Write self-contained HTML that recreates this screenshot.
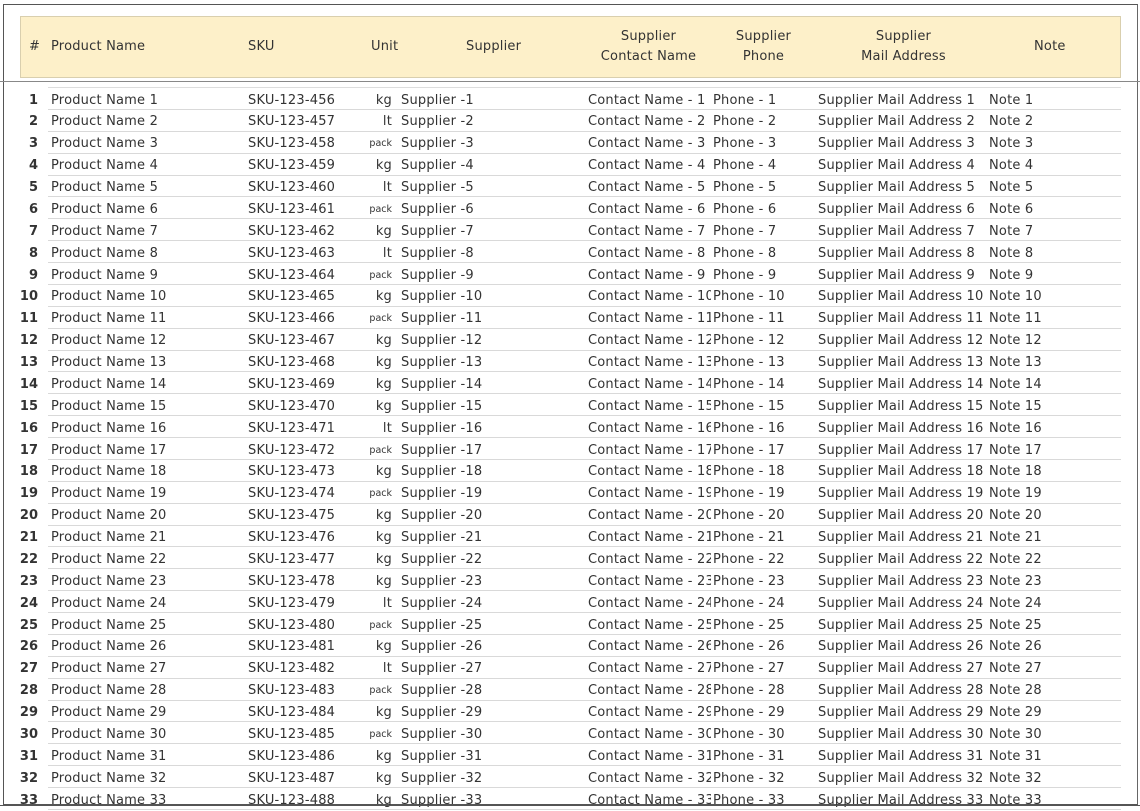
<!DOCTYPE html>
<html><head><meta charset="utf-8"><style>
*{margin:0;padding:0;box-sizing:border-box}
body{width:1140px;height:806px;overflow:hidden;background:#fff;font-family:"DejaVu Sans","Liberation Sans",sans-serif;color:#333;position:relative}
.frame{position:absolute;left:3px;top:4px;width:1135px;height:801px;border:1px solid #555;border-right-color:#666}
.hdr{position:absolute;left:20px;top:16px;width:1101px;height:62px;background:#fdf0c9;border:1px solid #d9cfae}
.hdr span{position:absolute;font-size:13px;line-height:19.5px;text-align:center;color:#333;letter-spacing:0.2px}
.hl{position:absolute;left:0;top:81px;width:1140px;height:1px;background:#888}
.hl2{position:absolute;left:48px;top:87px;width:1073px;height:1px;background:#ddd}
.r{position:absolute;left:0;width:1140px;height:21.875px;font-size:13px;line-height:21px;white-space:nowrap;letter-spacing:0.2px}
.r::after{content:"";position:absolute;left:48px;right:19px;bottom:0;height:1px;background:#d9d9d9}
.r span{position:absolute;top:1.5px}
.n{right:1102px;font-weight:bold;text-align:right;letter-spacing:0}
.p{left:51px}.s{left:248px}.u{right:748px}.u.k{font-size:9.5px;letter-spacing:0}
.sp{left:401px}.c{left:588px;width:123px;overflow:hidden}.ph{left:713px}.m{left:818px}.no{left:989px}
</style></head><body>
<div class="frame"></div>
<div class="hdr">
<span style="left:8px;top:20px">#</span>
<span style="left:30px;top:20px">Product Name</span>
<span style="left:227px;top:20px">SKU</span>
<span style="left:350px;top:20px">Unit</span>
<span style="left:445px;top:20px">Supplier</span>
<span style="left:570px;top:10px;width:115px">Supplier<br>Contact Name</span>
<span style="left:705px;top:10px;width:75px">Supplier<br>Phone</span>
<span style="left:820px;top:10px;width:125px">Supplier<br>Mail Address</span>
<span style="left:1013px;top:20px">Note</span>
</div>
<div class="hl"></div><div class="hl2"></div>
<div id="rows">
<div class="r" style="top:88px"><span class="n">1</span><span class="p">Product Name 1</span><span class="s">SKU-123-456</span><span class="u">kg</span><span class="sp">Supplier -1</span><span class="c">Contact Name - 1</span><span class="ph">Phone - 1</span><span class="m">Supplier Mail Address 1</span><span class="no">Note 1</span></div>
<div class="r" style="top:109.875px"><span class="n">2</span><span class="p">Product Name 2</span><span class="s">SKU-123-457</span><span class="u">lt</span><span class="sp">Supplier -2</span><span class="c">Contact Name - 2</span><span class="ph">Phone - 2</span><span class="m">Supplier Mail Address 2</span><span class="no">Note 2</span></div>
<div class="r" style="top:131.75px"><span class="n">3</span><span class="p">Product Name 3</span><span class="s">SKU-123-458</span><span class="u k">pack</span><span class="sp">Supplier -3</span><span class="c">Contact Name - 3</span><span class="ph">Phone - 3</span><span class="m">Supplier Mail Address 3</span><span class="no">Note 3</span></div>
<div class="r" style="top:153.625px"><span class="n">4</span><span class="p">Product Name 4</span><span class="s">SKU-123-459</span><span class="u">kg</span><span class="sp">Supplier -4</span><span class="c">Contact Name - 4</span><span class="ph">Phone - 4</span><span class="m">Supplier Mail Address 4</span><span class="no">Note 4</span></div>
<div class="r" style="top:175.5px"><span class="n">5</span><span class="p">Product Name 5</span><span class="s">SKU-123-460</span><span class="u">lt</span><span class="sp">Supplier -5</span><span class="c">Contact Name - 5</span><span class="ph">Phone - 5</span><span class="m">Supplier Mail Address 5</span><span class="no">Note 5</span></div>
<div class="r" style="top:197.375px"><span class="n">6</span><span class="p">Product Name 6</span><span class="s">SKU-123-461</span><span class="u k">pack</span><span class="sp">Supplier -6</span><span class="c">Contact Name - 6</span><span class="ph">Phone - 6</span><span class="m">Supplier Mail Address 6</span><span class="no">Note 6</span></div>
<div class="r" style="top:219.25px"><span class="n">7</span><span class="p">Product Name 7</span><span class="s">SKU-123-462</span><span class="u">kg</span><span class="sp">Supplier -7</span><span class="c">Contact Name - 7</span><span class="ph">Phone - 7</span><span class="m">Supplier Mail Address 7</span><span class="no">Note 7</span></div>
<div class="r" style="top:241.125px"><span class="n">8</span><span class="p">Product Name 8</span><span class="s">SKU-123-463</span><span class="u">lt</span><span class="sp">Supplier -8</span><span class="c">Contact Name - 8</span><span class="ph">Phone - 8</span><span class="m">Supplier Mail Address 8</span><span class="no">Note 8</span></div>
<div class="r" style="top:263px"><span class="n">9</span><span class="p">Product Name 9</span><span class="s">SKU-123-464</span><span class="u k">pack</span><span class="sp">Supplier -9</span><span class="c">Contact Name - 9</span><span class="ph">Phone - 9</span><span class="m">Supplier Mail Address 9</span><span class="no">Note 9</span></div>
<div class="r" style="top:284.875px"><span class="n">10</span><span class="p">Product Name 10</span><span class="s">SKU-123-465</span><span class="u">kg</span><span class="sp">Supplier -10</span><span class="c">Contact Name - 10</span><span class="ph">Phone - 10</span><span class="m">Supplier Mail Address 10</span><span class="no">Note 10</span></div>
<div class="r" style="top:306.75px"><span class="n">11</span><span class="p">Product Name 11</span><span class="s">SKU-123-466</span><span class="u k">pack</span><span class="sp">Supplier -11</span><span class="c">Contact Name - 11</span><span class="ph">Phone - 11</span><span class="m">Supplier Mail Address 11</span><span class="no">Note 11</span></div>
<div class="r" style="top:328.625px"><span class="n">12</span><span class="p">Product Name 12</span><span class="s">SKU-123-467</span><span class="u">kg</span><span class="sp">Supplier -12</span><span class="c">Contact Name - 12</span><span class="ph">Phone - 12</span><span class="m">Supplier Mail Address 12</span><span class="no">Note 12</span></div>
<div class="r" style="top:350.5px"><span class="n">13</span><span class="p">Product Name 13</span><span class="s">SKU-123-468</span><span class="u">kg</span><span class="sp">Supplier -13</span><span class="c">Contact Name - 13</span><span class="ph">Phone - 13</span><span class="m">Supplier Mail Address 13</span><span class="no">Note 13</span></div>
<div class="r" style="top:372.375px"><span class="n">14</span><span class="p">Product Name 14</span><span class="s">SKU-123-469</span><span class="u">kg</span><span class="sp">Supplier -14</span><span class="c">Contact Name - 14</span><span class="ph">Phone - 14</span><span class="m">Supplier Mail Address 14</span><span class="no">Note 14</span></div>
<div class="r" style="top:394.25px"><span class="n">15</span><span class="p">Product Name 15</span><span class="s">SKU-123-470</span><span class="u">kg</span><span class="sp">Supplier -15</span><span class="c">Contact Name - 15</span><span class="ph">Phone - 15</span><span class="m">Supplier Mail Address 15</span><span class="no">Note 15</span></div>
<div class="r" style="top:416.125px"><span class="n">16</span><span class="p">Product Name 16</span><span class="s">SKU-123-471</span><span class="u">lt</span><span class="sp">Supplier -16</span><span class="c">Contact Name - 16</span><span class="ph">Phone - 16</span><span class="m">Supplier Mail Address 16</span><span class="no">Note 16</span></div>
<div class="r" style="top:438px"><span class="n">17</span><span class="p">Product Name 17</span><span class="s">SKU-123-472</span><span class="u k">pack</span><span class="sp">Supplier -17</span><span class="c">Contact Name - 17</span><span class="ph">Phone - 17</span><span class="m">Supplier Mail Address 17</span><span class="no">Note 17</span></div>
<div class="r" style="top:459.875px"><span class="n">18</span><span class="p">Product Name 18</span><span class="s">SKU-123-473</span><span class="u">kg</span><span class="sp">Supplier -18</span><span class="c">Contact Name - 18</span><span class="ph">Phone - 18</span><span class="m">Supplier Mail Address 18</span><span class="no">Note 18</span></div>
<div class="r" style="top:481.75px"><span class="n">19</span><span class="p">Product Name 19</span><span class="s">SKU-123-474</span><span class="u k">pack</span><span class="sp">Supplier -19</span><span class="c">Contact Name - 19</span><span class="ph">Phone - 19</span><span class="m">Supplier Mail Address 19</span><span class="no">Note 19</span></div>
<div class="r" style="top:503.625px"><span class="n">20</span><span class="p">Product Name 20</span><span class="s">SKU-123-475</span><span class="u">kg</span><span class="sp">Supplier -20</span><span class="c">Contact Name - 20</span><span class="ph">Phone - 20</span><span class="m">Supplier Mail Address 20</span><span class="no">Note 20</span></div>
<div class="r" style="top:525.5px"><span class="n">21</span><span class="p">Product Name 21</span><span class="s">SKU-123-476</span><span class="u">kg</span><span class="sp">Supplier -21</span><span class="c">Contact Name - 21</span><span class="ph">Phone - 21</span><span class="m">Supplier Mail Address 21</span><span class="no">Note 21</span></div>
<div class="r" style="top:547.375px"><span class="n">22</span><span class="p">Product Name 22</span><span class="s">SKU-123-477</span><span class="u">kg</span><span class="sp">Supplier -22</span><span class="c">Contact Name - 22</span><span class="ph">Phone - 22</span><span class="m">Supplier Mail Address 22</span><span class="no">Note 22</span></div>
<div class="r" style="top:569.25px"><span class="n">23</span><span class="p">Product Name 23</span><span class="s">SKU-123-478</span><span class="u">kg</span><span class="sp">Supplier -23</span><span class="c">Contact Name - 23</span><span class="ph">Phone - 23</span><span class="m">Supplier Mail Address 23</span><span class="no">Note 23</span></div>
<div class="r" style="top:591.125px"><span class="n">24</span><span class="p">Product Name 24</span><span class="s">SKU-123-479</span><span class="u">lt</span><span class="sp">Supplier -24</span><span class="c">Contact Name - 24</span><span class="ph">Phone - 24</span><span class="m">Supplier Mail Address 24</span><span class="no">Note 24</span></div>
<div class="r" style="top:613px"><span class="n">25</span><span class="p">Product Name 25</span><span class="s">SKU-123-480</span><span class="u k">pack</span><span class="sp">Supplier -25</span><span class="c">Contact Name - 25</span><span class="ph">Phone - 25</span><span class="m">Supplier Mail Address 25</span><span class="no">Note 25</span></div>
<div class="r" style="top:634.875px"><span class="n">26</span><span class="p">Product Name 26</span><span class="s">SKU-123-481</span><span class="u">kg</span><span class="sp">Supplier -26</span><span class="c">Contact Name - 26</span><span class="ph">Phone - 26</span><span class="m">Supplier Mail Address 26</span><span class="no">Note 26</span></div>
<div class="r" style="top:656.75px"><span class="n">27</span><span class="p">Product Name 27</span><span class="s">SKU-123-482</span><span class="u">lt</span><span class="sp">Supplier -27</span><span class="c">Contact Name - 27</span><span class="ph">Phone - 27</span><span class="m">Supplier Mail Address 27</span><span class="no">Note 27</span></div>
<div class="r" style="top:678.625px"><span class="n">28</span><span class="p">Product Name 28</span><span class="s">SKU-123-483</span><span class="u k">pack</span><span class="sp">Supplier -28</span><span class="c">Contact Name - 28</span><span class="ph">Phone - 28</span><span class="m">Supplier Mail Address 28</span><span class="no">Note 28</span></div>
<div class="r" style="top:700.5px"><span class="n">29</span><span class="p">Product Name 29</span><span class="s">SKU-123-484</span><span class="u">kg</span><span class="sp">Supplier -29</span><span class="c">Contact Name - 29</span><span class="ph">Phone - 29</span><span class="m">Supplier Mail Address 29</span><span class="no">Note 29</span></div>
<div class="r" style="top:722.375px"><span class="n">30</span><span class="p">Product Name 30</span><span class="s">SKU-123-485</span><span class="u k">pack</span><span class="sp">Supplier -30</span><span class="c">Contact Name - 30</span><span class="ph">Phone - 30</span><span class="m">Supplier Mail Address 30</span><span class="no">Note 30</span></div>
<div class="r" style="top:744.25px"><span class="n">31</span><span class="p">Product Name 31</span><span class="s">SKU-123-486</span><span class="u">kg</span><span class="sp">Supplier -31</span><span class="c">Contact Name - 31</span><span class="ph">Phone - 31</span><span class="m">Supplier Mail Address 31</span><span class="no">Note 31</span></div>
<div class="r" style="top:766.125px"><span class="n">32</span><span class="p">Product Name 32</span><span class="s">SKU-123-487</span><span class="u">kg</span><span class="sp">Supplier -32</span><span class="c">Contact Name - 32</span><span class="ph">Phone - 32</span><span class="m">Supplier Mail Address 32</span><span class="no">Note 32</span></div>
<div class="r" style="top:788px"><span class="n">33</span><span class="p">Product Name 33</span><span class="s">SKU-123-488</span><span class="u">kg</span><span class="sp">Supplier -33</span><span class="c">Contact Name - 33</span><span class="ph">Phone - 33</span><span class="m">Supplier Mail Address 33</span><span class="no">Note 33</span></div>
</div>
<div style="position:absolute;left:0;top:805px;width:1140px;height:1px;background:#555"></div>
</body></html>
